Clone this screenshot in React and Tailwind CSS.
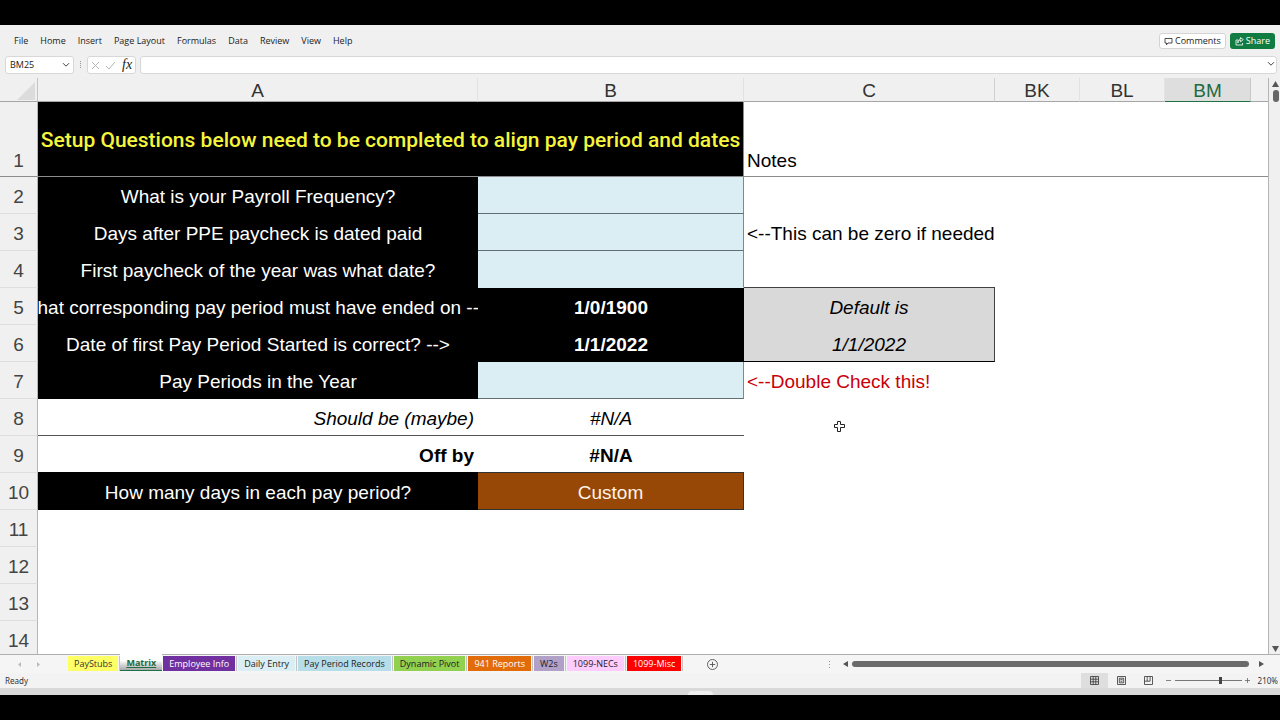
import { useState } from 'react'

const menus = ['File', 'Home', 'Insert', 'Page Layout', 'Formulas', 'Data', 'Review', 'View', 'Help']

const question = 'bg-black text-white text-center border-b border-b-black'
const blank = 'bg-[#daeef3] border-r border-r-[#7d8a8c] border-b'
const result = 'bg-black text-white text-center font-bold border-b border-b-black'
const plain = 'border-b border-b-transparent'

const rows = [
  { n: 2, a: 'What is your Payroll Frequency?', aClass: question, b: '', bClass: `${blank} border-b-[#5f6f72]` },
  { n: 3, a: 'Days after PPE paycheck is dated paid', aClass: question, b: '', bClass: `${blank} border-b-[#5f6f72]`, c: '<--This can be zero if needed' },
  { n: 4, a: 'First paycheck of the year was what date?', aClass: question, b: '', bClass: `${blank} border-b-[#daeef3]`, cClass: 'border-b border-b-[#404040]' },
  { n: 5, a: 'That corresponding pay period must have ended on -->', aClass: question, b: '1/0/1900', bClass: result, c: 'Default is', cClass: 'bg-[#d9d9d9] border-r border-r-[#404040] pb-px text-center italic' },
  { n: 6, a: 'Date of first Pay Period Started is correct? -->', aClass: question, b: '1/1/2022', bClass: result, c: '1/1/2022', cClass: 'bg-[#d9d9d9] border-r border-r-[#404040] border-b border-b-black text-center italic' },
  { n: 7, a: 'Pay Periods in the Year', aClass: question, b: '', bClass: `${blank} border-b-[#5f6f72]`, c: '<--Double Check this!', cClass: `${plain} text-[#c8000a]` },
  { n: 8, a: 'Should be (maybe)', aClass: 'text-right italic border-b border-b-[#555]', b: '#N/A', bClass: 'text-center italic border-b border-b-[#555]', cursor: true },
  { n: 9, a: 'Off by', aClass: 'text-right font-bold border-b border-b-black', b: '#N/A', bClass: 'text-center font-bold border-b border-b-[#333]' },
  { n: 10, a: 'How many days in each pay period?', aClass: question, b: 'Custom', bClass: 'bg-[#974706] text-[#fdf3e7] text-center border-r border-b border-[#333]' },
  { n: 11 },
  { n: 12 },
  { n: 13 },
  { n: 14 },
]

const sheets = [
  { name: 'PayStubs', className: 'bg-[#ffff66] text-[#333]' },
  { name: 'Matrix', className: '' },
  { name: 'Employee Info', className: 'bg-[#7030a0] text-white' },
  { name: 'Daily Entry', className: 'bg-[#daeef3] text-[#222]' },
  { name: 'Pay Period Records', className: 'bg-[#b7dee8] text-[#222]' },
  { name: 'Dynamic Pivot', className: 'bg-[#92d050] text-[#222]' },
  { name: '941 Reports', className: 'bg-[#e26b0a] text-white' },
  { name: 'W2s', className: 'bg-[#b1a0c7] text-[#222]' },
  { name: '1099-NECs', className: 'bg-[#ffccff] text-[#222]' },
  { name: '1099-Misc', className: 'bg-[#ff0000] text-white' },
]

function Ribbon() {
  return (
    <div className="flex h-[31px] shrink-0 items-start justify-between pt-2 pr-[5px] pl-[14px]">
      <nav className="flex h-4 items-center gap-3">
        {menus.map(m => (
          <button key={m} className="whitespace-nowrap text-[#222]">{m}</button>
        ))}
      </nav>
      <div className="flex gap-1">
        <button className="flex h-4 items-center gap-[2px] rounded-[3px] border border-[#d4d4d4] bg-white px-1 font-medium text-[#222]">
          <svg className="h-[9px] w-[9px]" viewBox="0 0 9 9" fill="none" stroke="currentColor" strokeWidth="0.8">
            <path d="M1 1.5h7v4.5H4L2.5 7.8V6H1z" />
          </svg>
          Comments
        </button>
        <button className="flex h-4 items-center gap-[2px] rounded-[3px] bg-[#107c41] px-[5px] font-medium text-white">
          <svg className="h-[9px] w-[9px]" viewBox="0 0 9 9" fill="none" stroke="currentColor" strokeWidth="0.8">
            <path d="M3 3H1v5h6.5V6M2.8 6C3 4 4 3.2 5.5 3.2V4.8L8.3 2.6 5.5.6v1.5C3.8 2.2 2.8 3.6 2.8 6z" />
          </svg>
          Share
        </button>
      </div>
    </div>
  )
}

function FormulaBar() {
  return (
    <div className="mb-1 flex h-[18px] shrink-0 items-stretch pr-[3px] pl-[5px]">
      <div className="relative w-[69px]">
        <select aria-label="Name box" className="h-full w-full appearance-none rounded-[3px] border border-[#d8d8d8] bg-white pl-1 text-[#222]">
          <option>BM25</option>
        </select>
        <svg className="pointer-events-none absolute top-[6px] right-1 h-[6px] w-[8px]" viewBox="0 0 8 6" fill="none" stroke="#444">
          <path d="M1 1.2l3 3 3-3" />
        </svg>
      </div>
      <svg className="mx-1 w-[5px]" viewBox="0 0 5 18" fill="#999">
        <path d="M2 5h1v1H2zM2 7h1v1H2zM2 9h1v1H2zM2 11h1v1H2z" />
      </svg>
      <div className="mr-1 flex w-[49px] items-center justify-around rounded-[3px] border border-[#d8d8d8] bg-white">
        <button aria-label="Cancel">
          <svg className="h-[9px] w-[9px]" viewBox="0 0 9 9" stroke="#b5b5b5"><path d="M1 1l7 7M8 1L1 8" /></svg>
        </button>
        <button aria-label="Enter">
          <svg className="h-[9px] w-[11px]" viewBox="0 0 11 9" fill="none" stroke="#b5b5b5"><path d="M1 5l3 3 6-7" /></svg>
        </button>
        <button aria-label="Insert function" className="font-['Liberation_Serif',serif] text-[14px] leading-4 text-[#222] italic">
          fx
        </button>
      </div>
      <div className="relative flex-1">
        <input aria-label="Formula" className="block h-full w-full rounded-[3px] border border-[#d8d8d8] bg-white px-1 outline-none" />
        <svg className="pointer-events-none absolute top-[5px] right-[2px] h-[6px] w-[8px]" viewBox="0 0 8 6" fill="none" stroke="#444">
          <path d="M1 1.2l3 3 3-3" />
        </svg>
      </div>
    </div>
  )
}

function Cursor() {
  return (
    <svg className="absolute top-[22px] left-[90px] h-[11px] w-[11px]" viewBox="0 0 11 11" fill="#fff" stroke="#222">
      <path d="M3.5 .5h3v3h4v3h-4v4h-3v-4h-3v-3h3z" />
    </svg>
  )
}

function Grid() {
  return (
    <div className="min-h-0 flex-1 overflow-hidden border-r border-[#b5b5b5] bg-white font-['Liberation_Sans',Arial,sans-serif] text-[19px] leading-[30px] text-black">
      <table className="w-full table-fixed border-separate border-spacing-0">
        <colgroup>
          <col className="w-[38px]" />
          <col className="w-[440px]" />
          <col className="w-[266px]" />
          <col className="w-[251px]" />
          <col className="w-[85px]" />
          <col className="w-[85px]" />
          <col className="w-[86px]" />
          <col />
        </colgroup>
        <thead>
          <tr className="h-6 bg-[#f0f0f0] leading-5 text-[#333] [&>th]:border-b [&>th]:border-b-[#a6a6a6] [&>th]:p-0 [&>th]:pt-[3px] [&>th]:font-normal">
            <th className="border-r border-r-[#c4c4c4]">
              <svg className="mr-[2px] ml-auto h-[18px] w-[18px]" viewBox="0 0 18 18" fill="#dcdcdc"><path d="M18 0v18H0z" /></svg>
            </th>
            <th className="border-r border-r-[#e2e2e2]">A</th>
            <th className="border-r border-r-[#e2e2e2]">B</th>
            <th className="border-r border-r-[#d0d0d0]">C</th>
            <th className="border-r border-r-[#e2e2e2]">BK</th>
            <th className="border-r border-r-[#e2e2e2]">BL</th>
            <th className="border-r border-r-[#c8c8c8] border-b-[#1e7145]! bg-[#dedede] text-[#1e6b41]">BM</th>
            <th></th>
          </tr>
        </thead>
        <tbody>
          <tr className="h-[75px] [&>*]:border-b [&>*]:border-b-[#8c8c8c] [&>*]:p-0">
            <th className="border-r border-r-[#b5b5b5] bg-[#f0f0f0] align-bottom font-normal text-[#444]">1</th>
            <td colSpan={2} className="border-r border-r-[#8c8c8c] bg-black pt-[2px]! text-center font-['Roboto',sans-serif] text-[21px] font-medium whitespace-nowrap text-[#f5f53d]">
              Setup Questions below need to be completed to align pay period and dates
            </td>
            <td className="pl-[3px]! align-bottom">Notes</td>
            <td colSpan={4}></td>
          </tr>
          {rows.map(r => (
            <tr key={r.n} className="h-[37px] whitespace-nowrap">
              <th className="border-r border-b border-r-[#b5b5b5] border-b-[#dedede] bg-[#f0f0f0] p-0 pt-[3px] font-normal text-[#444]">{r.n}</th>
              <td className={`overflow-hidden p-0 pt-[3px] ${r.aClass ?? plain}`}>
                {r.aClass === question ? <div className="flex justify-center">{r.a}</div> : <div className="pr-1">{r.a}</div>}
              </td>
              <td className={`p-0 pt-[3px] ${r.bClass ?? plain}`}>{r.b}</td>
              <td className={`relative p-0 pt-[3px] ${r.cClass ?? plain} ${r.n === 5 || r.n === 6 ? '' : 'pl-[3px]'}`}>
                {r.c}
                {r.cursor && <Cursor />}
              </td>
              <td colSpan={4}></td>
            </tr>
          ))}
        </tbody>
      </table>
    </div>
  )
}

function VerticalScroll() {
  return (
    <div className="flex w-[11px] shrink-0 flex-col items-center justify-between pt-[3px] pb-[2px] pl-[2px]">
      <div className="flex flex-col items-center gap-[3px]">
        <svg className="h-[6px] w-[7px]" viewBox="0 0 7 6" fill="#555"><path d="M3.5 0L7 6H0z" /></svg>
        <div className="h-3 w-[6px] rounded-full bg-[#666]"></div>
      </div>
      <svg className="h-[6px] w-[7px]" viewBox="0 0 7 6" fill="#555"><path d="M0 0h7L3.5 6z" /></svg>
    </div>
  )
}

function SheetTabs() {
  const [active, setActive] = useState('Matrix')

  return (
    <div className="flex h-[19px] shrink-0 bg-[#f5f5f5]">
      <div className="flex min-w-0 flex-1 border-t border-[#b0b0b0]">
        <div className="flex w-[67px] shrink-0 items-center gap-4 pl-[18px]">
          <svg className="h-[5px] w-[3px]" viewBox="0 0 3 5" fill="#bbb"><path d="M3 0v5L0 2.5z" /></svg>
          <svg className="h-[5px] w-[3px]" viewBox="0 0 3 5" fill="#bbb"><path d="M0 0v5l3-2.5z" /></svg>
        </div>
        <div className="flex items-start">
          {sheets.map(s => (
            s.name === active ? (
              <button
                key={s.name}
                className="-mt-px flex h-[17px] items-end border-b border-[#1e7145] bg-linear-to-b from-white from-40% to-[#a9a9a9] px-[6px] font-bold whitespace-nowrap text-[#1e6b41] underline"
              >
                {s.name}
              </button>
            ) : (
              <div key={s.name} className="mt-px flex h-[15px] border-r border-[#c4c4c4] px-px">
                <button onClick={() => setActive(s.name)} className={`px-[6px] whitespace-nowrap ${s.className}`}>
                  {s.name}
                </button>
              </div>
            )
          ))}
        </div>
        <button aria-label="New sheet" className="ml-6 self-center">
          <svg className="h-[11px] w-[11px]" viewBox="0 0 11 11" fill="none" stroke="#555" strokeWidth="0.9">
            <circle cx="5.5" cy="5.5" r="5" />
            <path d="M5.5 2.8v5.4M2.8 5.5h5.4" />
          </svg>
        </button>
      </div>
      <div className="flex w-[36%] items-center border-t border-[#b0b0b0] pr-4 pl-[10px]">
        <svg className="mr-3 h-[7px] w-[2px]" viewBox="0 0 2 7" fill="#999"><path d="M0 0h1v1H0zM0 3h1v1H0zM0 6h1v1H0z" /></svg>
        <svg className="mr-1 h-[6px] w-[5px]" viewBox="0 0 5 6" fill="#555"><path d="M5 0v6L0 3z" /></svg>
        <div className="h-[6px] flex-1 rounded-full bg-[#6b6b6b]"></div>
        <svg className="ml-[10px] h-[6px] w-[5px]" viewBox="0 0 5 6" fill="#555"><path d="M0 0v6l5-3z" /></svg>
      </div>
    </div>
  )
}

function StatusBar() {
  return (
    <div className="flex h-[15px] shrink-0 items-center justify-between bg-[#f3f3f3] pr-[2px] pl-[5px] font-['Noto_Sans',sans-serif] text-[8px] text-[#333]">
      <span>Ready</span>
      <div className="flex h-full items-center">
        <button aria-label="Normal view" className="flex h-full w-[27px] items-center justify-center bg-[#dedede]">
          <svg className="h-[9px] w-[9px]" viewBox="0 0 9 9" fill="none" stroke="#333" strokeWidth="0.8">
            <path d="M.5.5h8v8h-8zM3.2.5v8M5.8.5v8M.5 3.2h8M.5 5.8h8" />
          </svg>
        </button>
        <button aria-label="Page layout view" className="flex h-full w-[27px] items-center justify-center">
          <svg className="h-[9px] w-[9px]" viewBox="0 0 9 9" fill="none" stroke="#333" strokeWidth="0.8">
            <path d="M.5.5h8v8h-8zM2.3 2.2h4.4v4.6H2.3zM3.4 3.6h2.2M3.4 5.2h2.2" />
          </svg>
        </button>
        <button aria-label="Page break preview" className="flex h-full w-[27px] items-center justify-center">
          <svg className="h-[9px] w-[9px]" viewBox="0 0 9 9" fill="none" stroke="#333" strokeWidth="0.8">
            <path d="M.5.5h8v8h-8zM.5 5.2h5.6V.5M3.2.5v4.7" />
          </svg>
        </button>
        <button aria-label="Zoom out" className="mx-1">
          <svg className="h-[5px] w-[5px]" viewBox="0 0 5 5" stroke="#666" strokeWidth="0.8"><path d="M0 2.5h5" /></svg>
        </button>
        <input
          type="range"
          aria-label="Zoom"
          min="10"
          max="400"
          defaultValue="280"
          className="h-[7px] w-[67px] appearance-none bg-[linear-gradient(#777,#777)] bg-[length:100%_1px] bg-center bg-no-repeat [&::-webkit-slider-thumb]:h-[7px] [&::-webkit-slider-thumb]:w-[3px] [&::-webkit-slider-thumb]:appearance-none [&::-webkit-slider-thumb]:bg-[#444]"
        />
        <button aria-label="Zoom in" className="mr-2 ml-[3px]">
          <svg className="h-[5px] w-[5px]" viewBox="0 0 5 5" stroke="#666" strokeWidth="0.8"><path d="M0 2.5h5M2.5 0v5" /></svg>
        </button>
        <span>210%</span>
      </div>
    </div>
  )
}

export default function App() {
  return (
    <div className="flex h-screen flex-col bg-black py-[25px] font-['Open_Sans',sans-serif] text-[9px] leading-[14px]">
      <div className="flex min-h-0 flex-1 flex-col bg-[#f0f0f0]">
        <Ribbon />
        <FormulaBar />
        <div className="flex min-h-0 flex-1">
          <Grid />
          <VerticalScroll />
        </div>
        <SheetTabs />
        <StatusBar />
        {/* Sliver of the taskbar */}
        <div className="flex h-[7px] shrink-0 items-end justify-center bg-[#d9d9d9] pl-[120px]">
          <div className="h-1 w-[25px] rounded-t-sm bg-[#eeeeee]"></div>
        </div>
      </div>
    </div>
  )
}
